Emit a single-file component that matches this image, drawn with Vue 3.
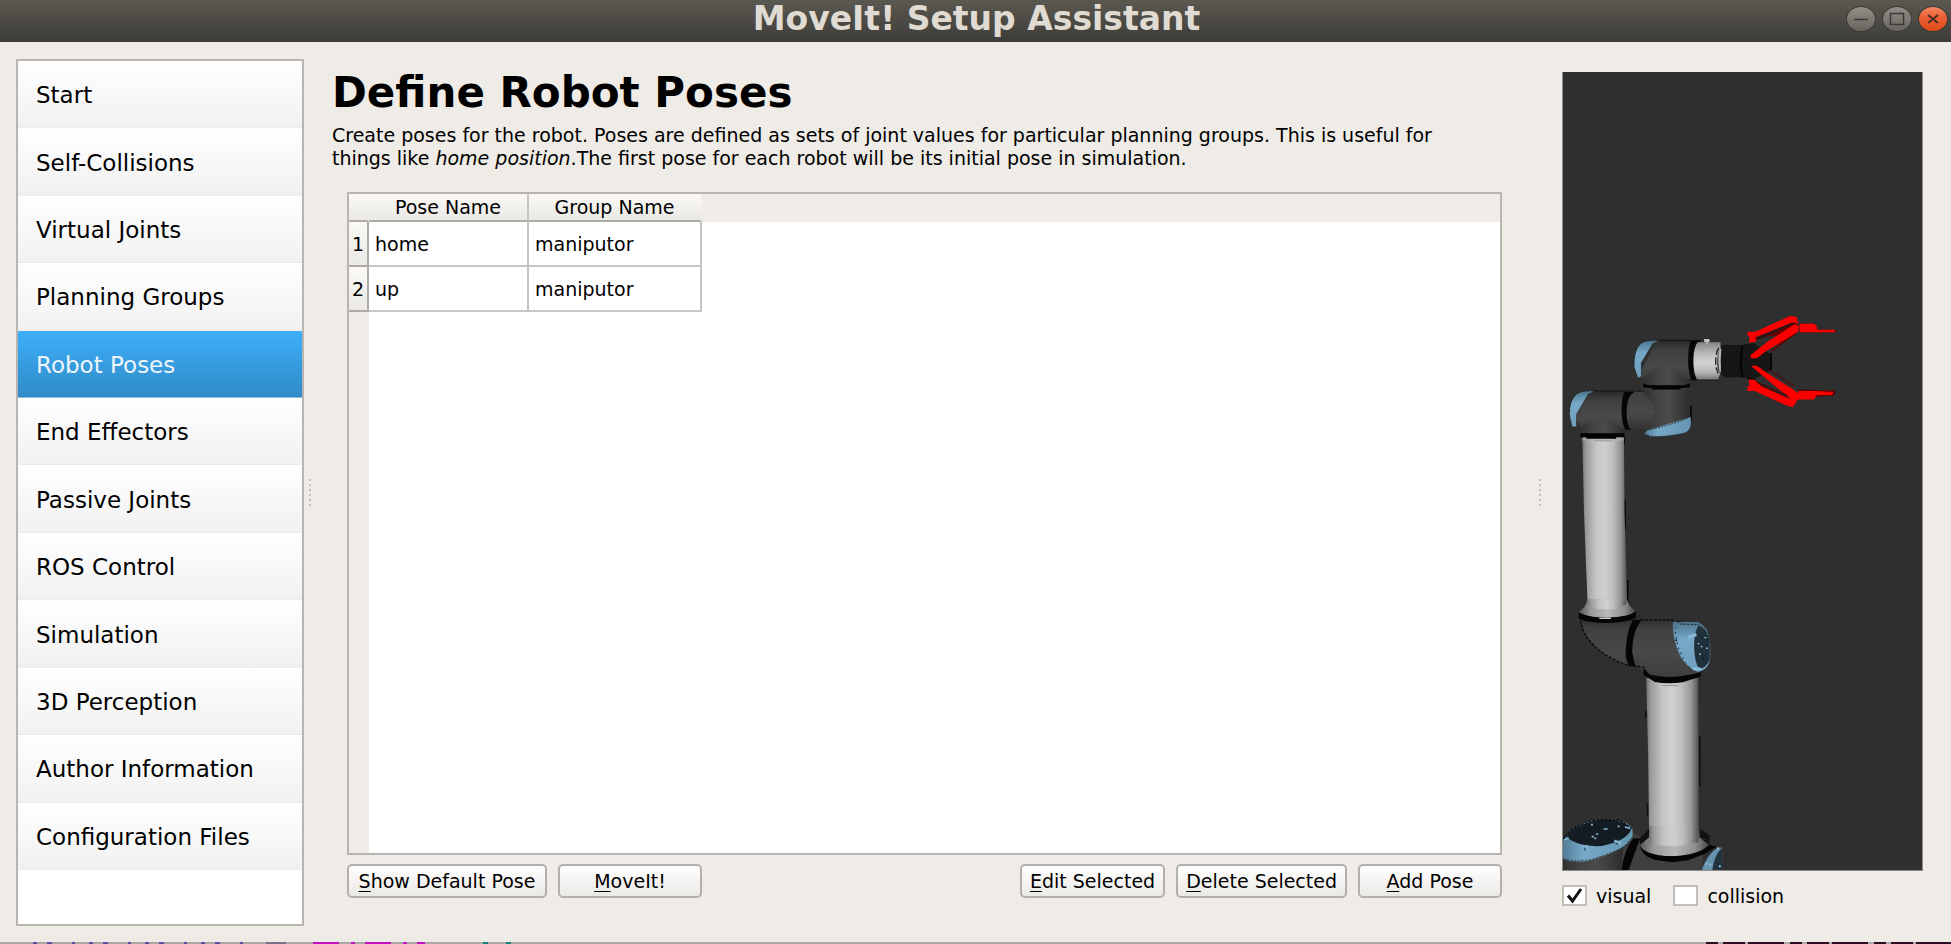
<script setup>
import { ref } from 'vue'

const steps = [
  'Start',
  'Self-Collisions',
  'Virtual Joints',
  'Planning Groups',
  'Robot Poses',
  'End Effectors',
  'Passive Joints',
  'ROS Control',
  'Simulation',
  '3D Perception',
  'Author Information',
  'Configuration Files',
]
const current = ref('Robot Poses')

const poses = [
  { name: 'home', group: 'maniputor' },
  { name: 'up', group: 'maniputor' },
]

const showVisual = ref(true)
const showCollision = ref(false)
</script>

<template>
  <div class="window">
    <header class="titlebar">
      <div class="window-title">MoveIt! Setup Assistant</div>
      <div class="window-buttons">
        <button type="button" aria-label="Minimize">
          <svg viewBox="0 0 32 27">
            <ellipse cx="16" cy="13" rx="15" ry="13" fill="#3b3a35" />
            <ellipse cx="16" cy="13" rx="14" ry="12" fill="url(#greyBtn)" />
            <path d="M9 13.500H23" stroke="#3b3a35" stroke-width="1.500" />
          </svg>
        </button>
        <button type="button" aria-label="Maximize">
          <svg viewBox="0 0 32 27">
            <ellipse cx="16" cy="13" rx="15" ry="13" fill="#3b3a35" />
            <ellipse cx="16" cy="13" rx="14" ry="12" fill="url(#greyBtn)" />
            <rect x="9.500" y="7.500" width="13" height="11" fill="none" stroke="#3b3a35" stroke-width="1.500" />
          </svg>
        </button>
        <button type="button" aria-label="Close">
          <svg viewBox="0 0 32 27">
            <ellipse cx="16" cy="13" rx="15" ry="13" fill="#3b3a35" />
            <ellipse cx="16" cy="13" rx="14" ry="12" fill="url(#redBtn)" />
            <path d="M11 9L21 17M21 9L11 17" stroke="#4a3027" stroke-width="2" />
          </svg>
        </button>
      </div>
    </header>

    <div class="content">
      <nav class="sidebar" aria-label="Setup steps">
        <button
          v-for="step in steps"
          :key="step"
          type="button"
          class="step"
          :class="{ active: step === current }"
          @click="current = step"
        >{{ step }}</button>
      </nav>

      <div class="splitter narrow"><i v-for="n in 6" :key="n"></i></div>

      <main class="panel">
        <h1>Define Robot Poses</h1>
        <p class="intro">
          Create poses for the robot. Poses are defined as sets of joint values for particular planning groups. This is useful for things like <em>home position</em>.The first pose for each robot will be its initial pose in simulation.
        </p>
        <div class="table-box">
          <table>
            <thead>
              <tr>
                <th class="index"></th>
                <th class="pose" scope="col">Pose Name</th>
                <th class="group" scope="col">Group Name</th>
              </tr>
            </thead>
            <tbody>
              <tr v-for="(pose, i) in poses" :key="pose.name">
                <th class="index" scope="row">{{ i + 1 }}</th>
                <td>{{ pose.name }}</td>
                <td>{{ pose.group }}</td>
              </tr>
            </tbody>
          </table>
        </div>
        <div class="actions">
          <button type="button" class="wide"><u>S</u>how Default Pose</button>
          <button type="button"><u>M</u>oveIt!</button>
          <span class="spacer"></span>
          <button type="button"><u>E</u>dit Selected</button>
          <button type="button"><u>D</u>elete Selected</button>
          <button type="button"><u>A</u>dd Pose</button>
        </div>
      </main>

      <div class="splitter"><i v-for="n in 6" :key="n"></i></div>

      <aside class="preview">
        <div class="viewport">
          <svg viewBox="0 0 360 799" preserveAspectRatio="xMinYMax slice" role="img" aria-label="Robot arm">
            <defs>
              <linearGradient id="greyBtn" x2="0" y2="1">
                <stop offset="0" stop-color="#918f88" />
                <stop offset="1" stop-color="#66645d" />
              </linearGradient>
              <linearGradient id="redBtn" x2="0" y2="1">
                <stop offset="0" stop-color="#f58a65" />
                <stop offset=".4" stop-color="#ec6237" />
                <stop offset="1" stop-color="#df4a16" />
              </linearGradient>
              <linearGradient id="tube">
                <stop offset="0" stop-color="#707070" />
                <stop offset=".08" stop-color="#999" />
                <stop offset=".3" stop-color="#c4c4c4" />
                <stop offset=".5" stop-color="#d0d0d0" />
                <stop offset=".68" stop-color="#bdbdbd" />
                <stop offset=".85" stop-color="#979797" />
                <stop offset="1" stop-color="#505050" />
              </linearGradient>
              <linearGradient id="flare">
                <stop offset="0" stop-color="#555" />
                <stop offset=".2" stop-color="#999" />
                <stop offset=".5" stop-color="#b9b9b9" />
                <stop offset=".8" stop-color="#8f8f8f" />
                <stop offset="1" stop-color="#444" />
              </linearGradient>
              <linearGradient id="wrist" x2="0" y2="1">
                <stop offset="0" stop-color="#858585" />
                <stop offset=".3" stop-color="#bababa" />
                <stop offset=".55" stop-color="#d2d2d2" />
                <stop offset=".8" stop-color="#b5b5b5" />
                <stop offset="1" stop-color="#777" />
              </linearGradient>
              <linearGradient id="darkV" x2="0" y2="1">
                <stop offset="0" stop-color="#282828" />
                <stop offset=".2" stop-color="#404040" />
                <stop offset=".6" stop-color="#494949" />
                <stop offset="1" stop-color="#303030" />
              </linearGradient>
              <linearGradient id="darkH">
                <stop offset="0" stop-color="#303030" />
                <stop offset=".25" stop-color="#414141" />
                <stop offset=".55" stop-color="#4b4b4b" />
                <stop offset="1" stop-color="#2c2c2c" />
              </linearGradient>
              <linearGradient id="blue">
                <stop offset="0" stop-color="#527b94" />
                <stop offset=".3" stop-color="#77a9c8" />
                <stop offset="1" stop-color="#6594b0" />
              </linearGradient>
              <linearGradient id="blueV" x2="0" y2="1">
                <stop offset="0" stop-color="#4d758c" />
                <stop offset=".35" stop-color="#76a8c7" />
                <stop offset="1" stop-color="#6fa0be" />
              </linearGradient>
            </defs>
            <rect width="360" height="799" fill="#2f2f2f" />

            <!-- forearm, wrist and gripper -->
            <g transform="translate(-8 228) scale(.3333)">
              <path d="M210 600V690M218 842V912M207 415V432M408 318V364" stroke="#080808" stroke-width="6" />
              <path d="M82 412H207L209 640L217 915H98L87 640Z" fill="url(#tube)" />
              <path d="M82 416H207V423H82Z" fill="#b0b0b0" opacity=".7" />
              <path d="M117 424H172" stroke="#999" stroke-width="3" />

              <path d="M112 275H235V388H186Q207 394 208 408H78V384L56 352L70 300Z" fill="url(#darkV)" />
              <path d="M78 384Q140 340 208 390V408H78Z" fill="url(#darkH)" />
              <path d="M112 274H270" stroke="#111" stroke-width="3" stroke-dasharray="18 4" />
              <path d="M76 401H209V413H184V418H94V413H76Z" fill="#030303" />
              <path d="M222 277H268V246H404V365L270 398L266 389H222Z" fill="url(#darkV)" />
              <path d="M268 270H404V365L274 396L300 340Q296 300 268 286Z" fill="url(#darkH)" />
              <path d="M208 277H238Q215 290 215 336Q215 376 228 391H211Q201 374 200 334Q200 292 208 277Z" fill="#060606" />

              <path d="M308 122H414V238H385L404 258H266V236L252 224Z" fill="url(#darkV)" />
              <path d="M266 234Q325 172 350 205L404 250V256H266Z" fill="url(#darkH)" />
              <path d="M300 122H440M405 241H492" stroke="#111" stroke-width="3" />
              <path d="M265 252L282 257H388L405 252V264L376 266V270H292V266L265 263Z" fill="#030303" />

              <path d="M120 276L100 282L63 345L64 381H52L44 345Q44 300 66 283Q90 271 120 276Z" fill="url(#blueV)" />
              <path d="M116 278Q75 310 64 376" fill="none" stroke="#24343e" stroke-width="3" stroke-dasharray="5 4" />
              <path d="M44 350V320Q53 282 82 275H120" fill="none" stroke="#15202a" stroke-width="2" stroke-dasharray="5 7" />
              <path d="M314 123L294 130L258 190L259 233H249L238 200Q238 151 258 132Q280 120 314 123Z" fill="url(#blueV)" />
              <path d="M308 126Q270 160 257 234" fill="none" stroke="#24343e" stroke-width="3" stroke-dasharray="5 4" />
              <path d="M238 198V170Q246 130 270 123H310" fill="none" stroke="#15202a" stroke-width="2" stroke-dasharray="5 7" />
              <path d="M408 352V376Q402 400 380 402Q330 413 285 410L268 402L278 392Z" fill="url(#blue)" />
              <path d="M270 393Q345 379 408 352M270 403L288 411Q350 412 393 400" fill="none" stroke="#24343e" stroke-width="3" stroke-dasharray="6 4" />

              <path d="M408 124H438Q415 134 415 184Q415 226 430 241H410Q400 220 400 180Q400 140 408 124Z" fill="#060606" />
              <path d="M428 128H497V144Q489 155 487 185Q487 215 496 222L490 240H426Q415 216 416 180Q416 145 428 128Z" fill="url(#wrist)" />
              <path d="M448 118H464V128H458V134H454V127H448Z" fill="#c5c5c5" />
              <path d="M492 145Q481 160 483 202L490 222" fill="none" stroke="#222" stroke-width="4" stroke-dasharray="22 8" />
              <path d="M498 147Q490 180 498 218" fill="none" stroke="#bbb" stroke-width="7" />
              <path d="M500 136H562L596 130L650 165L653 186L649 212L596 240L562 234H508L498 218Z" fill="#161616" />
              <path d="M564 138Q552 184 564 232" fill="none" stroke="#050505" stroke-width="6" />
              <path d="M649 160V212M576 235L602 241" stroke="#050505" stroke-width="5" />

              <g fill="#640000">
                <path d="M604 114L720 68L732 80L652 150L648 158L728 100Z" />
                <path d="M735 72H780L790 90L844 91V98H735Z" />
                <path d="M730 270L840 273L843 280L836 288L730 296Z" />
              </g>
              <path d="M606 118L714 70M606 254L714 302" stroke="#2a1414" stroke-width="7" />
              <g fill="#fc0000">
                <path d="M578 96H602L706 49L727 52V62L733 72L714 68L604 112V126L584 129V108H578Z" />
                <path d="M588 166L640 125L720 74L734 80L730 96L638 152L606 176H588Z" />
                <path d="M735 72H779L787 82V90H840V98H735Z" />
                <path d="M582 240H598L620 260L706 298L726 306L714 323L692 316L600 274H578V260H584Z" />
                <path d="M588 198H606L640 222L716 270L730 282V274H780L836 277L832 286H786L778 300H730L716 314L706 297L640 242Z" />
              </g>
              <path d="M602 116L612 112M642 211L720 260M730 273L780 272M608 248L700 288" stroke="#560000" stroke-width="4" stroke-dasharray="7 3" />
            </g>

            <!-- elbow, upper arm and base -->
            <g transform="translate(-8 528) scale(.3333)">
              <path d="M76 55L243 50L355 70L376 170Q385 200 434 218L430 232L345 240L268 226L267 204L202 194Q90 145 76 55Z" fill="url(#darkV)" />
              <path d="M245 190Q350 130 432 222L345 240L268 224Z" fill="#444" opacity=".7" />
              <path d="M77 64Q88 145 208 195L268 204M258 62H355M365 68L440 76" fill="none" stroke="#0b0b0b" stroke-width="4" stroke-dasharray="9 4" />
              <path d="M97 0H216Q220 20 242 36V42Q220 54 156 57Q94 54 73 42V36Q94 24 97 0Z" fill="url(#flare)" />
              <path d="M97 0H214V15L188 30H128L98 15Z" fill="url(#tube)" />
              <path d="M71 38Q92 54 156 55Q223 53 243 36V56Q220 69 156 71Q94 70 72 58Z" fill="#050505" />
              <path d="M133 57H168" stroke="#ccc" stroke-width="4" />
              <path d="M234 61H260Q230 100 232 160L241 201H222L212 170Q212 100 234 61Z" fill="#050505" />

              <path d="M354 68H430Q462 83 466 130V180Q460 212 430 218Q402 211 378 174Q352 120 354 68Z" fill="url(#blueV)" />
              <path d="M430 80Q458 85 465 130V180Q454 208 433 209Q420 190 418 150Q416 105 430 80Z" fill="#20313c" />
              <path d="M400 114L425 106M414 208L440 210" stroke="#8abbd8" stroke-width="9" />
              <path d="M362 82V106L370 145L390 188L410 211" fill="none" stroke="#26465a" stroke-width="4" stroke-dasharray="5 11" />
              <path d="M366 66L376 74L430 76Q462 90 465 132" fill="none" stroke="#17272f" stroke-width="3" stroke-dasharray="7 4" />
              <path d="M449 115H454M429 133H434M438 142H443M454 147H459M433 165H438" stroke="#9bcbea" stroke-width="4" />
              <path d="M442 178H447M362 123H367" stroke="#080f14" stroke-width="5" />

              <path d="M273 335V355M435 410V562M278 612V650" stroke="#111" stroke-width="5" />
              <path d="M274 236H430L432 742H283L280 480Z" fill="url(#tube)" />
              <path d="M265 205L284 226Q345 243 438 219V232L384 249Q340 255 300 248L266 227Z" fill="#050505" />
              <path d="M322 259H370" stroke="#929292" stroke-width="3" />

              <path d="M24 720L230 700L270 720L444 745V816H21V720Z" fill="#3f3f3f" />
              <path d="M21 780Q110 785 160 760L205 740L200 816H21Z" fill="url(#darkH)" />
              <path d="M235 718H256L220 816H200Q206 755 235 718Z" fill="#050505" />
              <path d="M24 730Q50 670 145 661Q215 659 233 690V711Q215 755 100 785Q55 792 24 780Z" fill="url(#blue)" />
              <path d="M34 714Q55 676 145 661Q210 661 229 690Q218 725 140 741Q72 745 34 714Z" fill="#131c23" />
              <path d="M24 722Q52 675 128 663H195L230 688" fill="none" stroke="#070a0d" stroke-width="4" stroke-dasharray="8 4" />
              <path d="M25 779L60 786L110 782L204 748L231 716" fill="none" stroke="#253f50" stroke-width="3" stroke-dasharray="6 5" />
              <path d="M108 677H114M123 705H130M110 713H117M118 718H124M146 690H158M188 682H194M210 684L226 688M26 724L41 716" stroke="#83b4d2" stroke-width="5" />
              <path d="M84 742L96 742L94 755M178 725L196 732L190 739" fill="none" stroke="#82b4d3" stroke-width="7" />
              <path d="M90 746V755M182 732L190 737" stroke="#284b60" stroke-width="4" />

              <path d="M280 692L255 718V740L353 785L464 740V710L437 690V715L464 725" fill="#111" />
              <path d="M283 698V715L255 738Q265 763 330 771Q420 774 463 737L432 715V698Z" fill="url(#flare)" />
              <path d="M283 680H431V730Q400 741 355 742Q310 741 283 732Z" fill="url(#tube)" />
              <path d="M255 740Q268 768 350 773Q435 769 464 738L486 743L448 765L400 784L352 790L298 782Q260 771 255 740Z" fill="#050505" />
              <path d="M440 816Q456 765 488 746L502 753V816Z" fill="#6694ae" />
              <path d="M472 816Q477 775 496 752H502V816Z" fill="#22333e" />
              <path d="M488 748H500M453 794L473 799M492 802H498" stroke="#8bbfdd" stroke-width="6" stroke-dasharray="6 4" />
            </g>
          </svg>
        </div>
        <div class="toggles">
          <label>
            <span class="tick">
              <input v-model="showVisual" type="checkbox" />
              <svg v-if="showVisual" viewBox="0 0 25 20"><path d="M6 10.500L10.500 16L19 4" fill="none" stroke="#111" stroke-width="3" /></svg>
            </span>
            visual
          </label>
          <label>
            <span class="tick">
              <input v-model="showCollision" type="checkbox" />
              <svg v-if="showCollision" viewBox="0 0 25 20"><path d="M6 10.500L10.500 16L19 4" fill="none" stroke="#111" stroke-width="3" /></svg>
            </span>
            collision
          </label>
        </div>
      </aside>
    </div>

    <svg class="edge" viewBox="0 0 1951 2" preserveAspectRatio="none" aria-hidden="true">
      <rect width="1951" height="2" fill="#a9a8a5" />
      <path d="M33 1H250" stroke="#5b50a0" stroke-width="2" stroke-dasharray="4 10 5 20 3 14" />
      <path d="M266 1H286" stroke="#77728c" stroke-width="2" />
      <path d="M313 1H425" stroke="#c414c4" stroke-width="2" stroke-dasharray="26 12 4 10" />
      <path d="M483 1H520" stroke="#187f78" stroke-width="2" stroke-dasharray="5 18" />
      <path d="M1706 1H1951" stroke="#2b0a22" stroke-width="2" stroke-dasharray="12 5 22 3 36 6" />
    </svg>
  </div>
</template>

<style>
body {
  margin: 0;
  background: #efebe6;
}
</style>

<style scoped>
* {
  box-sizing: border-box;
}
.window {
  display: flex;
  flex-direction: column;
  min-height: 100vh;
  background: #efebe6;
  color: #000;
  font: 19px/22px "DejaVu Sans", sans-serif;
}
button {
  font: inherit;
  color: inherit;
}
.titlebar {
  display: grid;
  grid-template-columns: 108px 1fr 106px;
  height: 42px;
  background: linear-gradient(#5b5850, #3d3c37);
}
.window-title {
  grid-column: 2;
  text-align: center;
  color: #dfdbd2;
  font-size: 33px;
  font-weight: 700;
  line-height: 37px;
}
.window-buttons {
  display: flex;
  gap: 4px;
  padding-top: 6px;
}
.window-buttons button {
  width: 32px;
  height: 27px;
  padding: 0;
  border: 0;
  background: none;
}
.window-buttons svg {
  display: block;
}
.content {
  flex: 1;
  display: flex;
  padding: 17px 28px 16px 16px;
}
.sidebar {
  flex: none;
  width: 288px;
  display: grid;
  grid-template-rows: repeat(12, 1fr);
  padding-bottom: 54px;
  border: 2px solid #b8b4b0;
  background: #fff;
}
.step {
  padding: 2px 18px 0;
  border: 0;
  border-bottom: 1px solid #efebe4;
  background: linear-gradient(#fff, #f1f1f1);
  font-size: 23px;
  text-align: left;
  white-space: nowrap;
}
.step.active {
  background: linear-gradient(#3daefa, #308cc6);
  border-bottom-color: #8dbbe0;
  color: #eef5fa;
}
.splitter {
  flex: none;
  width: 44px;
  display: flex;
  flex-direction: column;
  align-items: center;
  justify-content: center;
  gap: 3px;
}
.splitter.narrow {
  width: 12px;
}
.splitter i {
  width: 2px;
  height: 2px;
  background: #c3bfba;
}
.panel {
  flex: 1;
  min-width: 0;
  display: flex;
  flex-direction: column;
  padding: 14px 16px 28px;
}
h1 {
  margin: 0 0 11px;
  color: #000;
  font-size: 42px;
  line-height: 40px;
}
.intro {
  margin: 0 32px 22px 0;
  line-height: 23px;
}
.table-box {
  flex: 1;
  margin-left: 15px;
  border: 2px solid #b8b4b0;
  background:
    linear-gradient(#efebe6, #efebe6) 0 0 / 100% 28px no-repeat,
    linear-gradient(#efebe6, #efebe6) 0 0 / 20px 100% no-repeat,
    #fff;
}
table {
  border-collapse: separate;
  border-spacing: 0;
  table-layout: fixed;
  width: 353px;
}
th {
  padding: 0;
  font-weight: 400;
  text-align: center;
  background: linear-gradient(#fbf9f6, #ebe9e5);
  border-right: 2px solid #c8c5c1;
}
thead th {
  height: 28px;
  border-bottom: 2px solid #aeaba7;
}
thead .index,
thead .group {
  border-right-color: transparent;
}
.index {
  width: 20px;
}
.pose {
  width: 160px;
}
tbody th {
  border-right-color: #aeaba7;
  border-bottom: 2px solid #aeaba7;
}
td {
  height: 45px;
  padding: 0 6px;
  background: #fff;
  border-right: 2px solid #c6c6c6;
  border-bottom: 2px solid #c6c6c6;
}
.actions {
  display: flex;
  gap: 11px;
  margin: 9px 0 0 15px;
}
.actions button {
  min-width: 144px;
  height: 34px;
  padding: 0 8px;
  border: 2px solid #b3afab;
  border-radius: 5px;
  background: linear-gradient(#fff, #ebe9e6);
  white-space: nowrap;
}
.actions .wide {
  min-width: 200px;
}
.actions u {
  text-decoration-thickness: 1px;
  text-underline-offset: 3px;
}
.spacer {
  flex: 1;
}
.preview {
  flex: none;
  width: 361px;
  display: flex;
  flex-direction: column;
  padding: 13px 0 20px;
}
.viewport {
  flex: 1;
  display: flex;
  min-height: 0;
  border: 1px solid #8d8b88;
  border-top: 0;
  background: #2f2f2f;
}
.viewport svg {
  flex: 1;
  width: 100%;
  height: auto;
}
.toggles {
  display: flex;
  gap: 22px;
  margin-top: 14px;
}
.toggles label {
  display: flex;
  align-items: center;
  gap: 9px;
  height: 21px;
}
.tick {
  position: relative;
  width: 25px;
  height: 21px;
}
.tick input {
  appearance: none;
  display: block;
  width: 25px;
  height: 21px;
  margin: 0;
  border: 2px solid #c1bdb8;
  background: #fff;
}
.tick svg {
  position: absolute;
  inset: 0;
  pointer-events: none;
}
.edge {
  display: block;
  width: 100%;
  height: 2px;
}
</style>
